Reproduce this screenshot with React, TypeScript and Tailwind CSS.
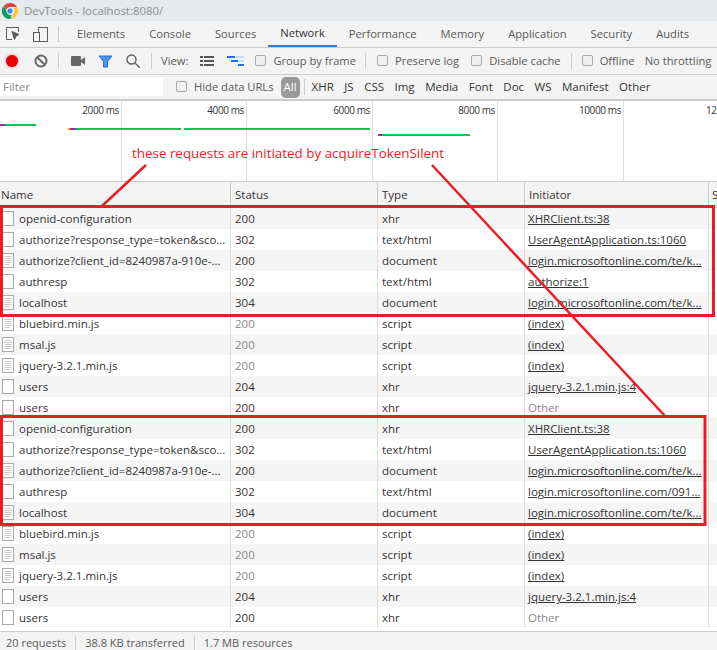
import React from 'react';

type Row = { name: string; status: string; type: string; initiator: string; doc?: boolean; dim?: boolean; other?: boolean };

const LOGIN = 'login.microsoftonline.com/te/k...';

const firstGroup: Row[] = [
  { name: 'openid-configuration', status: '200', type: 'xhr', initiator: 'XHRClient.ts:38' },
  { name: 'authorize?response_type=token&sco...', status: '302', type: 'text/html', initiator: 'UserAgentApplication.ts:1060' },
  { name: 'authorize?client_id=8240987a-910e-...', status: '200', type: 'document', initiator: LOGIN, doc: true },
  { name: 'authresp', status: '302', type: 'text/html', initiator: 'authorize:1' },
  { name: 'localhost', status: '304', type: 'document', initiator: LOGIN, doc: true },
];

const tail: Row[] = [
  { name: 'bluebird.min.js', status: '200', type: 'script', initiator: '(index)', doc: true, dim: true },
  { name: 'msal.js', status: '200', type: 'script', initiator: '(index)', doc: true, dim: true },
  { name: 'jquery-3.2.1.min.js', status: '200', type: 'script', initiator: '(index)', doc: true, dim: true },
  { name: 'users', status: '204', type: 'xhr', initiator: 'jquery-3.2.1.min.js:4' },
  { name: 'users', status: '200', type: 'xhr', initiator: 'Other', other: true },
];

const rows: Row[] = [
  ...firstGroup,
  ...tail,
  ...firstGroup.map((r) =>
    r.name === 'authresp' ? { ...r, initiator: 'login.microsoftonline.com/091...' } : r
  ),
  ...tail,
];

const tabs = ['Elements', 'Console', 'Sources', 'Network', 'Performance', 'Memory', 'Application', 'Security', 'Audits'];
const filters = ['XHR', 'JS', 'CSS', 'Img', 'Media', 'Font', 'Doc', 'WS', 'Manifest', 'Other'];

function ChromeLogo() {
  return (
    <svg width="16" height="16" viewBox="0 0 16 16" className="shrink-0">
      <path d="M8 0a8 8 0 0 1 7 4H8a4 4 0 0 0-3.800 2.700L1.700 3A8 8 0 0 1 8 0z" fill="#db4437" />
      <path d="M15 4a8 8 0 0 1-6.500 12l3-5.200A4 4 0 0 0 11.500 6L15 4z" fill="#fcc934" />
      <path d="M8.500 16A8 8 0 0 1 1.700 3l3 5.300a4 4 0 0 0 4.800 3.600L8.500 16z" fill="#0f9d58" />
      <circle cx="8" cy="8" r="3.100" fill="#4285f4" stroke="#fff" strokeWidth="0.800" />
    </svg>
  );
}

function Check({ label }: { label: string }) {
  return (
    <label className="flex items-center gap-[7px] text-[11.2px] text-[#5a5a5a] whitespace-nowrap">
      <span className="block shrink-0 w-[11px] h-[11px] rounded-[2px] border border-[#a8a8a8] bg-[#f1f1f1]" />
      {label}
    </label>
  );
}

function Divider() {
  return <span className="block w-px h-4 bg-[#ccc]" />;
}

function FileIcon({ doc }: { doc?: boolean }) {
  return (
    <svg width="12" height="15" viewBox="0 0 12 15" className="shrink-0 -mt-[1px]">
      <rect x="0.500" y="0.500" width="11" height="14" fill="#fff" stroke="#a9a9a9" />
      {doc && <path d="M2.500 3.500h7M2.500 5.500h7M2.500 7.500h7M2.500 9.500h7M2.500 11.500h5" stroke="#c9c9c9" />}
    </svg>
  );
}

function Overview() {
  const labels = [
    { text: '2000 ms', line: 121 },
    { text: '4000 ms', line: 246 },
    { text: '6000 ms', line: 372 },
    { text: '8000 ms', line: 497 },
    { text: '10000 ms', line: 623 },
  ];
  return (
    <div className="relative h-[81px] bg-white border-t border-[#ccc] overflow-hidden">
      {labels.map((l) => (
        <React.Fragment key={l.text}>
          <span className="absolute top-0 bottom-0 w-px bg-[#e0e0e0]" style={{ left: l.line }} />
          <span className="absolute top-[2px] text-[10px] leading-[15px] tracking-[-0.4px] text-[#333] whitespace-nowrap" style={{ right: 717 - l.line + 2 }}>
            {l.text}
          </span>
        </React.Fragment>
      ))}
      <span className="absolute top-[2px] left-[706px] text-[10px] leading-[15px] tracking-[-0.4px] text-[#333]">120</span>
      <svg width="717" height="81" className="absolute left-0 top-0">
        <rect x="0" y="23" width="5" height="2" fill="#9c27b0" />
        <rect x="5" y="23" width="31" height="2" fill="#00c853" />
        <rect x="68" y="27" width="2" height="2" fill="#ff9800" />
        <rect x="70" y="27" width="6" height="2" fill="#9c27b0" />
        <rect x="76" y="27" width="105" height="2" fill="#00c853" />
        <rect x="184" y="27" width="186" height="2" fill="#00c853" />
        <rect x="378" y="33" width="4" height="2" fill="#9c27b0" />
        <rect x="382" y="33" width="88" height="2" fill="#00c853" />
      </svg>
    </div>
  );
}

export default function App() {
  return (
    <div className="relative w-[717px] h-[650px] overflow-hidden bg-white text-[11.5px] text-[#333] font-['Open_Sans','Liberation_Sans',sans-serif]">
      {/* window title */}
      <div className="h-[21px] bg-[#e6e9ec] flex items-center gap-[6px] pl-[2px] text-[11.4px] text-[#8a8d90]">
        <ChromeLogo />
        <span>DevTools - localhost:8080/</span>
      </div>

      {/* tabs */}
      <div className="h-[27px] bg-[#f3f3f3] border-b border-[#ccc] flex items-center text-[11.2px] text-[#5a5a5a]">
        <div className="w-[58px] shrink-0 flex items-center gap-[13px] pl-[6px]">
          <svg width="14" height="14" viewBox="0 0 14 14" fill="none" stroke="#5a5a5a">
            <path d="M6 12.500H.500V.500h12V5" />
            <path d="M6 4.500l7 3-3 1.500-1.500 3.500z" fill="#5a5a5a" />
          </svg>
          <svg width="15" height="15" viewBox="0 0 15 15" fill="none" stroke="#5a5a5a">
            <rect x="5.500" y="0.500" width="9" height="14" />
            <rect x="0.500" y="5.500" width="6" height="9" fill="#f3f3f3" />
          </svg>
        </div>
        <Divider />
        <div className="flex h-full ml-[6px] shrink-0 whitespace-nowrap">
          {tabs.map((t) => (
            <div
              key={t}
              className={
                t === 'Network'
                  ? 'h-full flex items-center px-3 border-b-2 border-[#3879d9] text-[#333]'
                  : 'h-full flex items-center px-3'
              }
            >
              {t}
            </div>
          ))}
        </div>
      </div>

      {/* toolbar */}
      <div className="h-[27px] bg-[#f3f3f3] border-b border-[#ccc] flex items-center whitespace-nowrap text-[11.2px]">
        <span className="block shrink-0 w-[12px] h-[12px] ml-[6px] rounded-full bg-[#e60000] shadow-[0_0_3px_#e66]" />
        <svg width="14" height="14" viewBox="0 0 14 14" fill="none" stroke="#666" strokeWidth="2" className="shrink-0 ml-[16px]">
          <circle cx="7" cy="7" r="5.500" />
          <path d="M3 3l8 8" />
        </svg>
        <span className="ml-[10px]"><Divider /></span>
        <svg width="14" height="10" viewBox="0 0 14 10" fill="#666" className="shrink-0 ml-[12px]">
          <rect x="0" y="0" width="10" height="10" rx="1" />
          <path d="M10 4l4-3v8l-4-3z" />
        </svg>
        <svg width="15" height="13" viewBox="0 0 15 13" fill="#1a73e8" fillOpacity="0.750" stroke="#1a73e8" className="shrink-0 ml-[13px]">
          <path d="M1 1h13L9.500 6.500V12h-4V6.500z" />
        </svg>
        <svg width="14" height="14" viewBox="0 0 14 14" fill="none" stroke="#666" strokeWidth="1.500" className="shrink-0 ml-[13px]">
          <circle cx="5.500" cy="5.500" r="4.500" />
          <path d="M9 9l5 5" />
        </svg>
        <span className="ml-[11px]"><Divider /></span>
        <span className="ml-[9px] text-[#5a5a5a]">View:</span>
        <svg width="14" height="10" viewBox="0 0 14 10" fill="#555" className="shrink-0 ml-[12px]">
          <path d="M0 0h3v2H0zM4 0h10v2H4zM0 4h3v2H0zM4 4h10v2H4zM0 8h3v2H0zM4 8h10v2H4z" />
        </svg>
        <svg width="17" height="11" viewBox="0 0 17 11" className="shrink-0 ml-[13px]">
          <path d="M0 0h8v2H0zM4 4h7v2H4zM11 8h6v2h-6z" fill="#1a73e8" />
          <path d="M8 0h9v2H8zM11 4h6v2h-6z" fill="#c6dafc" />
        </svg>
        <div className="ml-[11px]">
          <Check label="Group by frame" />
        </div>
        <span className="ml-[9px]"><Divider /></span>
        <div className="ml-[11px] flex items-center gap-[12px]">
          <Check label="Preserve log" />
          <Check label="Disable cache" />
        </div>
        <span className="ml-[10px]"><Divider /></span>
        <div className="ml-[10px]"><Check label="Offline" /></div>
        <span className="ml-[10px] text-[#5a5a5a]">No throttling</span>
      </div>

      {/* filter bar */}
      <div className="h-[25px] bg-[#f3f3f3] border-b border-[#ccc] flex items-center whitespace-nowrap">
        <div className="w-[163px] h-[18px] bg-white pl-[3px] flex items-center text-[#8a8a8a]">Filter</div>
        <div className="ml-[13px]"><Check label="Hide data URLs" /></div>
        <span className="ml-[7px] h-[21px] w-[19px] rounded-[5px] bg-[#9a9a9a] text-white flex items-center justify-center">All</span>
        <span className="ml-[4px] mr-[7px]"><Divider /></span>
        <div className="flex items-center gap-[10.5px] text-[#333]">
          {filters.map((f) => (
            <span key={f}>{f}</span>
          ))}
        </div>
      </div>

      <Overview />

      {/* request table */}
      <div className="h-[27px] bg-[#f3f3f3] border-t border-b border-[#ccc] grid grid-cols-[231px_147px_147px_184px_8px] items-stretch">
        {['Name', 'Status', 'Type', 'Initiator'].map((h, i) => (
          <div key={h} className={i === 0 ? 'flex items-center pl-[1px] border-r border-[#ccc]' : 'flex items-center pl-[4px] border-r border-[#ccc]'}>
            {h}
          </div>
        ))}
        <div className="flex items-center pl-[3px]">S</div>
      </div>
      <div>
        {rows.map((r, i) => (
          <div
            key={i}
            className={
              i % 2 === 0
                ? 'h-[21px] bg-[#f5f5f5] grid grid-cols-[231px_147px_147px_184px_8px] items-stretch'
                : 'h-[21px] bg-white grid grid-cols-[231px_147px_147px_184px_8px] items-stretch'
            }
          >
            <div className="flex items-center gap-[5px] pl-[2px] border-r border-[#ddd] whitespace-nowrap overflow-hidden">
              <FileIcon doc={r.doc} />
              <span className="pt-[1px]">{r.name}</span>
            </div>
            <div className={r.dim ? 'flex items-center pt-[1px] pl-[4px] border-r border-[#ddd] text-[#888]' : 'flex items-center pt-[1px] pl-[4px] border-r border-[#ddd]'}>
              {r.status}
            </div>
            <div className="flex items-center pt-[1px] pl-[4px] border-r border-[#ddd]">{r.type}</div>
            <div className="flex items-center pt-[1px] pl-[3px] border-r border-[#ddd] whitespace-nowrap overflow-hidden">
              {r.other ? <span className="text-[#888]">{r.initiator}</span> : <span className="underline">{r.initiator}</span>}
            </div>
            <div />
          </div>
        ))}
      </div>

      {/* status bar */}
      <div className="mt-[3px] h-[19px] bg-[#f3f3f3] border-t border-[#ccc] flex items-center pt-[5px] pl-[6px] text-[11px] text-[#5a5a5a] whitespace-nowrap">
        <span>20 requests</span>
        <span className="mx-[9px]"><Divider /></span>
        <span>38.8 KB transferred</span>
        <span className="mx-[9px]"><Divider /></span>
        <span>1.7 MB resources</span>
      </div>

      {/* red annotation drawn over the screenshot */}
      <svg width="717" height="650" className="absolute left-0 top-0 pointer-events-none">
        <g fill="none" stroke="#ed1c24">
          <rect x="1.500" y="206.500" width="712" height="109" strokeWidth="3" />
          <rect x="1.500" y="416.500" width="703.500" height="108" strokeWidth="3" />
          <path d="M146 165L102 206" strokeWidth="2.500" />
          <path d="M432 165L665 416" strokeWidth="2.500" />
        </g>
      </svg>
      <span className="absolute left-[132px] top-[143px] text-[13.4px] text-[#ed1c24] whitespace-nowrap">
        these requests are initiated by acquireTokenSilent
      </span>
    </div>
  );
}
